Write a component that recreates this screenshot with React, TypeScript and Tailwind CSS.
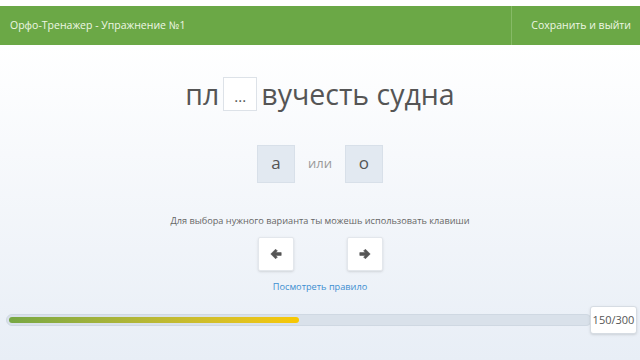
const font = { fontFamily: '"Open Sans", "Liberation Sans", sans-serif' };

function Arrow({ dir }: { dir: 'left' | 'right' }) {
  return (
    <svg width="12" height="12" viewBox="0 0 12 12" className={dir === 'right' ? 'rotate-180' : ''}>
      <path d="M0.8 6 L5.6 1.2 L7.4 3 L5.6 4.6 H11.2 V7.4 H5.6 L7.4 9 L5.6 10.8 Z" fill="#555" strokeLinejoin="round" stroke="#555" strokeWidth="0.6" />
    </svg>
  );
}

export default function App() {
  return (
    <div className="w-[640px] h-[360px] overflow-hidden bg-white flex flex-col" style={font}>
      {/* верхняя панель */}
      <div className="mt-[6px] h-[39px] bg-[#6ba846] flex items-stretch text-[#eef7e4] text-[10.5px]">
        <div className="flex-1 flex items-center pl-[10px]">Орфо-Тренажер - Упражнение №1</div>
        <div className="w-px bg-[#86ba66]" />
        <div className="flex items-center pl-[19px] pr-[9px]">Сохранить и выйти</div>
      </div>

      <div className="flex-1 flex flex-col items-center bg-gradient-to-b from-white to-[#e8eef6]">
        <div className="mt-[32px] h-[34px] flex items-center text-[28.5px] text-[#555] leading-none">
          <span>пл</span>
          <span className="mx-[4px] w-[34px] h-[34px] bg-white border border-[#dde2e8] flex items-center justify-center text-[15px] text-[#555] pt-[4px]">...</span>
          <span>вучесть судна</span>
        </div>

        <div className="mt-[34px] flex items-center">
          <div className="w-[38px] h-[38px] bg-[#e2e9f1] border border-[#d8e0e9] flex items-center justify-center text-[17px] text-[#555] pb-[2px]">а</div>
          <span className="mx-[13px] text-[13px] text-[#9a9a9a]">или</span>
          <div className="w-[38px] h-[38px] bg-[#e2e9f1] border border-[#d8e0e9] flex items-center justify-center text-[17px] text-[#555] pb-[2px]">о</div>
        </div>

        <div className="mt-[31px] text-[9.2px] leading-[14px] text-[#666]">Для выбора нужного варианта ты можешь использовать клавиши</div>

        <div className="mt-[9px] flex gap-[53px]">
          <div className="w-[36px] h-[34px] bg-white border border-[#e3e7ec] rounded-[2px] shadow-sm flex items-center justify-center">
            <Arrow dir="left" />
          </div>
          <div className="w-[36px] h-[34px] bg-white border border-[#e3e7ec] rounded-[2px] shadow-sm flex items-center justify-center">
            <Arrow dir="right" />
          </div>
        </div>

        <div className="mt-[9px] text-[9.2px] leading-[14px] text-[#3d8fd1]">Посмотреть правило</div>

        <div className="mt-[12px] w-full flex items-center pl-[6px] pr-[3px]">
          <div className="flex-1 h-[12px] rounded-full bg-[#d9e1ea] border border-[#cfd8e2] p-[2px] -mr-[2px]">
            <div className="h-full w-[50%] rounded-full bg-gradient-to-r from-[#77a743] to-[#f8c800]" />
          </div>
          <div className="relative w-[47px] h-[28px] bg-white border border-[#d6dce3] rounded-[3px] shadow flex items-center justify-center text-[11px] text-[#555]">150/300</div>
        </div>
      </div>
    </div>
  );
}
